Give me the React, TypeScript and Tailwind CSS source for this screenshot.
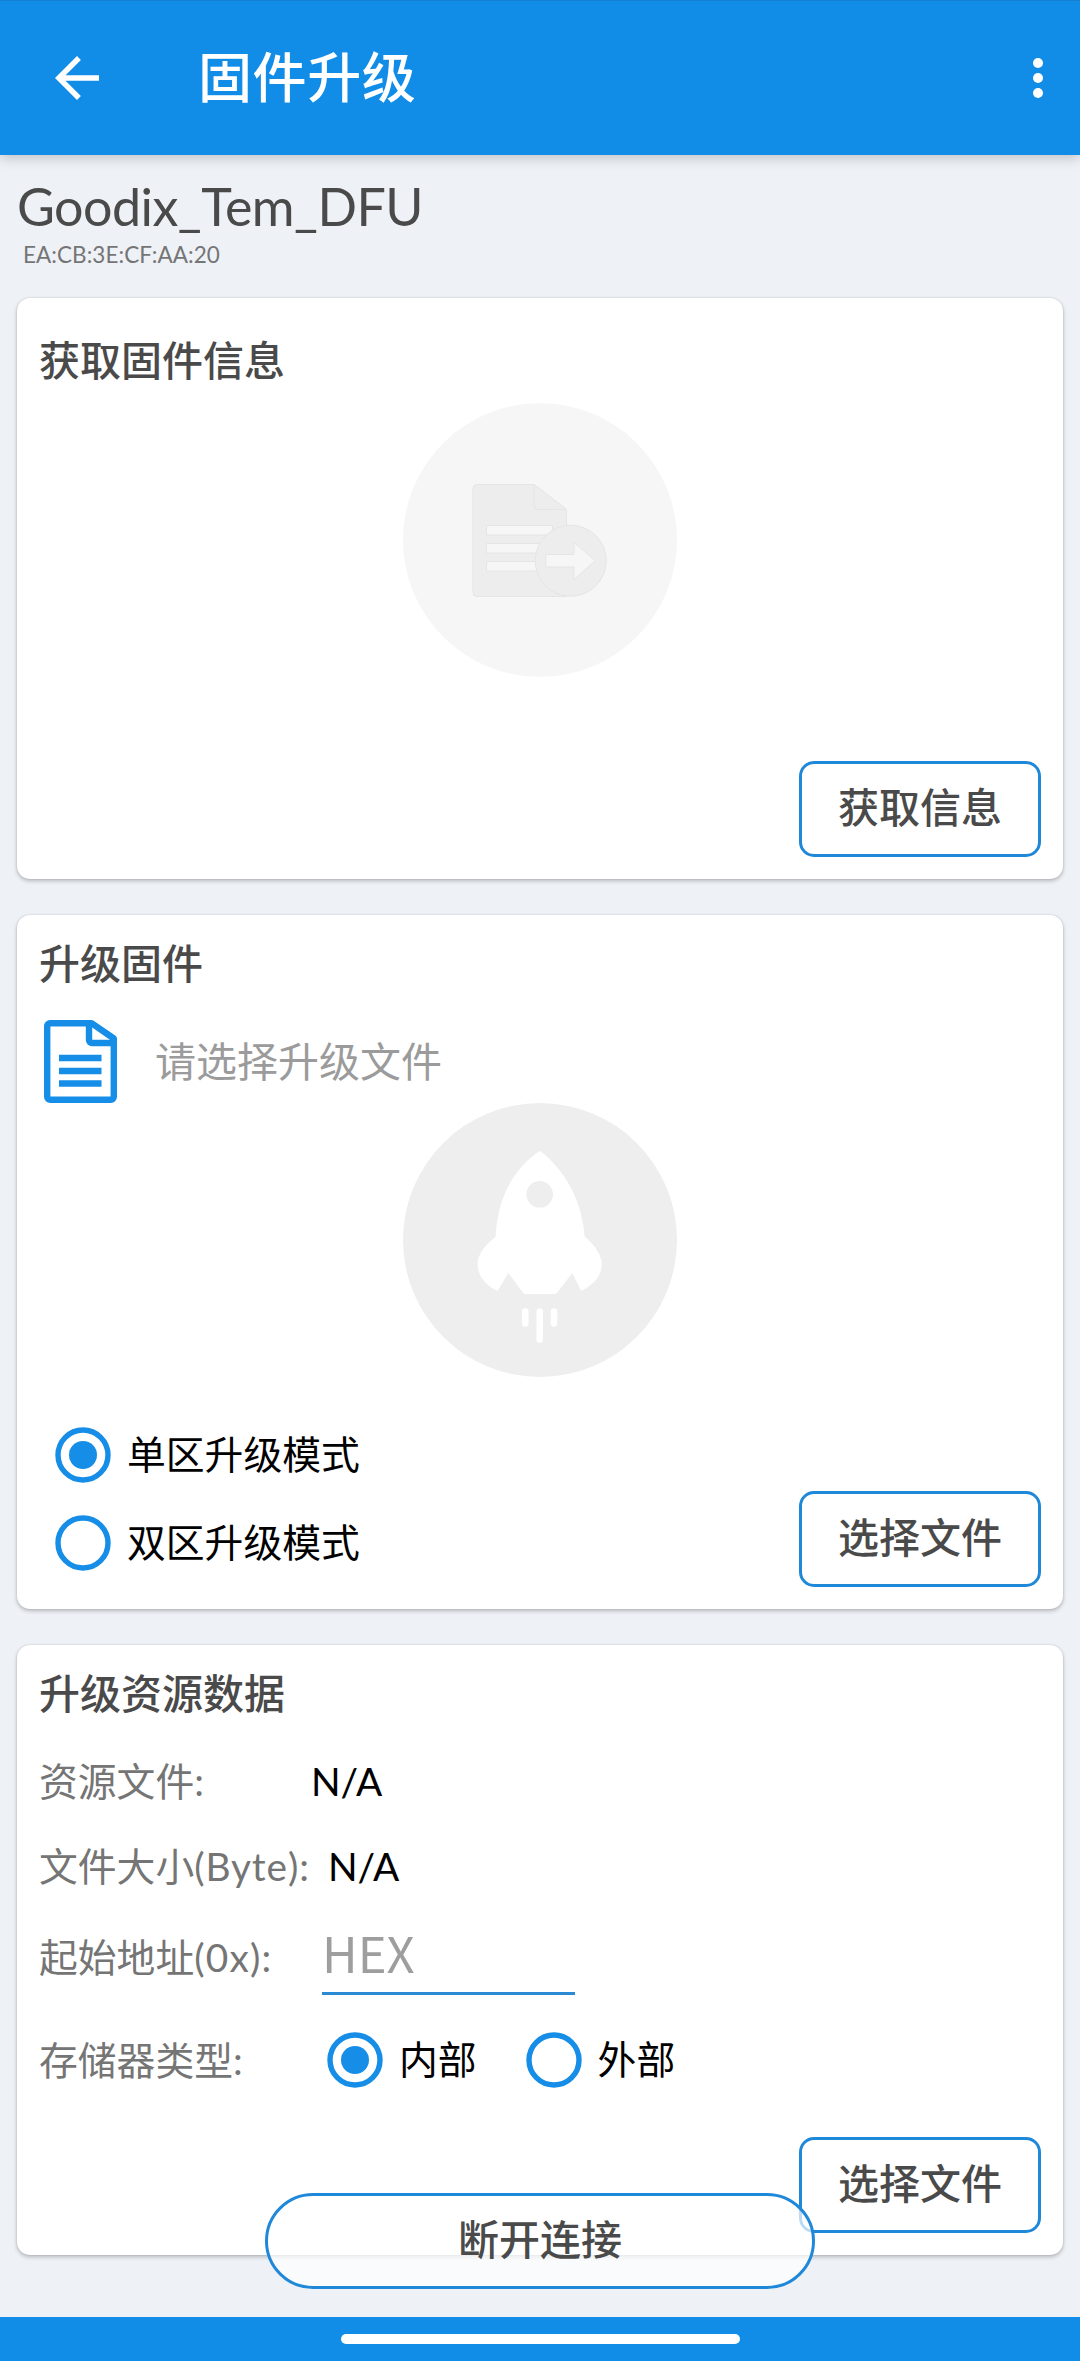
import type { ReactNode } from "react";

const Card = ({ title, className, children }: { title: string; className: string; children: ReactNode }) => (
  <section
    className={`flex flex-col rounded-[13px] bg-white px-[22px] pb-[22px] shadow-[0_2px_4px_rgba(0,0,0,0.24),0_0_2px_rgba(0,0,0,0.14)] ${className}`}
  >
    <h2 className="h-[60px] text-[41px] leading-[60px] font-medium text-[#4a4a4a]">{title}</h2>
    {children}
  </section>
);

const OutlineButton = ({ label }: { label: string }) => (
  <button className="h-24 w-[242px] shrink-0 self-end rounded-[15px] border-3 border-[#2088d8] pb-0.5 text-[41px] leading-[60px] font-medium text-[#4a4a4a]">
    {label}
  </button>
);

const Radio = ({ label, checked = false }: { label: string; checked?: boolean }) => (
  <label className="flex items-center text-[38.8px] leading-[60px] text-black">
    <svg width="56" height="56" viewBox="0 0 56 56" className="mr-4 shrink-0">
      <circle cx="28" cy="28" r="25" fill="none" stroke="#168ee7" strokeWidth="5.4" />
      {checked && <circle cx="28" cy="28" r="14" fill="#168ee7" />}
    </svg>
    <span className="pb-0.5">{label}</span>
  </label>
);

const BackIcon = () => (
  <svg width="66" height="66" viewBox="0 0 24 24" fill="#fff">
    <path d="M20 11H7.83l5.59-5.59L12 4l-8 8 8 8 1.41-1.41L7.83 13H20v-2z" />
  </svg>
);

const MoreIcon = () => (
  <svg width="12" height="42" viewBox="0 0 12 42" fill="#fff">
    <circle cx="6" cy="6" r="5" />
    <circle cx="6" cy="21" r="5" />
    <circle cx="6" cy="36" r="5" />
  </svg>
);

const FileIcon = () => (
  <svg width="73" height="83" viewBox="0 0 73 83" fill="none" stroke="#168ee7" strokeWidth="6.4">
    <path d="M6 3.200H47.500L69.800 18.500V76.800a3 3 0 0 1-3 3H6.200a3 3 0 0 1-3-3V6.200a3 3 0 0 1 3-3z" strokeLinejoin="round" />
    <path d="M45 3V20a3 3 0 0 0 3 3H70" />
    <path d="M15 38H57.500M15 51H57.500M15 63.500H57.500" />
  </svg>
);

const FirmwareInfoImage = () => (
  <svg width="274" height="274" viewBox="0 0 274 274" className="mt-3 self-center">
    <circle cx="137" cy="137" r="137" fill="#f6f6f6" />
    <g fill="#ededed" stroke="#e5e5e5" strokeWidth="1">
      <path d="M74 81.500H131L163.500 106.500V193.500H74a4 4 0 0 1-4-4V85.500a4 4 0 0 1 4-4z" />
      <path d="M131 81.500V103a3.500 3.500 0 0 0 3.500 3.500H163.500z" />
      <g fill="#f6f6f6">
        <path d="M83.500 122.500H149.500V132H83.500zM83.500 140.500H149.500V150H83.500zM83.500 158.500H149.500V168H83.500z" />
      </g>
      <circle cx="167.700" cy="157.700" r="35.500" />
      <path d="M142.700 151.500H171V139.500L192.300 157.700L171 176.500V164H142.700z" fill="#f6f6f6" />
    </g>
  </svg>
);

const RocketImage = () => (
  <svg width="274" height="274" viewBox="0 0 274 274" className="self-center">
    <circle cx="137" cy="137" r="137" fill="#eee" />
    <path
      d="M137 47.700C109 66 94 98 92.700 133.700C80 144 74.700 152 74.700 161C74.700 173 82 182 94.700 188L105.300 170L121 191H153L169.300 170L178.300 188C192 181 198.700 172 198.700 161C198.700 153 193 143 181.700 133.700C179 98 163 68 137 47.700z"
      fill="#fff"
    />
    <circle cx="136.700" cy="91.300" r="13.300" fill="#eee" />
    <path
      d="M122.300 208.500V220.500M136.700 208.500V236.500M151 208.500V220.500"
      stroke="#fff"
      strokeWidth="6.500"
      strokeLinecap="round"
    />
  </svg>
);

export default function App() {
  return (
    <div className="relative flex h-[2361px] w-[1080px] flex-col overflow-hidden bg-[#eef1f6] font-[Lato,'Noto_Sans_CJK_SC',sans-serif]">
      <header className="flex h-[155px] shrink-0 items-center border-t border-[#1380d2] bg-[#118de8] pr-[36px] pl-[44px] shadow-[0_3px_12px_rgba(0,0,0,0.2)]">
        <BackIcon />
        <h1 className="ml-[88px] flex-1 text-[54px] leading-[80px] font-medium tracking-[0.6px] text-white">固件升级</h1>
        <MoreIcon />
      </header>

      <div className="flex h-[143px] shrink-0 flex-col pt-[21px] pl-[17px] whitespace-nowrap">
        <p className="h-[60px] text-[52px] leading-[60px] tracking-[-0.55px] text-[#4a4a4a]">Goodix_Tem_DFU</p>
        <p className="mt-[3px] pl-1.5 text-[22.5px] leading-[32px] tracking-[0.05px] text-[#757575]">EA:CB:3E:CF:AA:20</p>
      </div>

      <main className="flex flex-col gap-9 px-[17px]">
        <Card title="获取固件信息" className="h-[581px] pt-[33px]">
          <FirmwareInfoImage />
          <div className="mt-auto flex justify-end">
            <OutlineButton label="获取信息" />
          </div>
        </Card>

        <Card title="升级固件" className="h-[694px] pt-[19px]">
          <div className="mt-[26px] flex h-[83px] shrink-0 items-center gap-[38px] pl-[5px]">
            <FileIcon />
            <span className="text-[41px] leading-[60px] text-[#9b9b9b]">请选择升级文件</span>
          </div>
          <RocketImage />
          <div className="mt-auto flex justify-between">
            <div className="flex flex-col pl-4">
              <div className="flex h-[88px] items-center">
                <Radio label="单区升级模式" checked />
              </div>
              <div className="flex h-[88px] items-center">
                <Radio label="双区升级模式" />
              </div>
            </div>
            <OutlineButton label="选择文件" />
          </div>
        </Card>

        <Card title="升级资源数据" className="h-[610px] pt-[19px]">
          <div className="mt-3.5 flex flex-col text-[38.8px] leading-[60px] whitespace-nowrap text-[#757575]">
            <div className="flex h-[85px] items-center">
              <span className="w-[272px]">资源文件:</span>
              <span className="text-black">N/A</span>
            </div>
            <div className="flex h-[85px] items-center">
              <span className="w-[289px]">
                文件大小<span className="tracking-[0.9px]">(Byte):</span>
              </span>
              <span className="text-black">N/A</span>
            </div>
            <div className="flex h-[98px] items-center">
              <span className="w-[283px]">
                起始地址<span className="tracking-[1.2px]">(0x):</span>
              </span>
              <div className="h-[76px] w-[253px] border-b-3 border-[#2a8ad4] font-['Noto_Sans_CJK_SC',sans-serif] text-[49px] leading-[66px] text-[#9e9e9e]">
                HEX
              </div>
            </div>
            <div className="flex h-[108px] items-center">
              <span className="w-[288px]">存储器类型:</span>
              <div className="flex gap-[49px]">
                <Radio label="内部" checked />
                <Radio label="外部" />
              </div>
            </div>
          </div>
          <div className="mt-auto flex justify-end">
            <OutlineButton label="选择文件" />
          </div>
        </Card>
      </main>

      {/* floats over the last card */}
      <button className="absolute top-[2193px] left-[265px] h-24 w-[550px] rounded-full border-3 border-[#2088d8] bg-white/70 pb-0.5 text-[41px] leading-[60px] font-medium text-[#4a4a4a]">
        断开连接
      </button>

      <footer className="mt-auto flex h-11 shrink-0 justify-center bg-[#118de8] pt-[17px]">
        <div className="h-2.5 w-[399px] rounded-full bg-white" />
      </footer>
    </div>
  );
}
